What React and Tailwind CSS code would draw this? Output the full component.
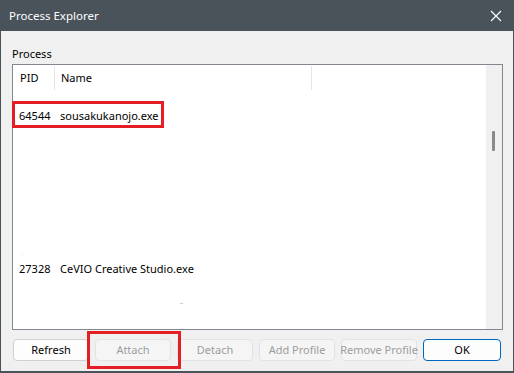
import React from 'react'

const font = { fontFamily: '"Noto Sans", "Open Sans", sans-serif' }

const buttons = [
  { label: 'Refresh', state: 'normal', w: 'w-[76px]' },
  { label: 'Attach', state: 'disabled', w: 'w-[76px]' },
  { label: 'Detach', state: 'disabled', w: 'w-[76px]' },
  { label: 'Add Profile', state: 'disabled', w: 'w-[76px]' },
  { label: 'Remove Profile', state: 'disabled', w: 'w-[76px]' },
  { label: 'OK', state: 'primary', w: 'w-[78px]' },
]

const buttonClass = {
  normal: 'bg-[#fdfdfd] border-[#d0d0d0] text-black',
  disabled: 'bg-[#f5f5f5] border-[#e3e3e3] text-[#9d9d9d]',
  primary: 'bg-[#fdfdfd] border-[#0067c0] text-black',
}

const App = () => {
  return (
    <div
      className="relative w-[514px] h-[373px] flex flex-col bg-[#4a535a] overflow-hidden text-[11px]"
      style={font}
    >
      {/* Title bar */}
      <div className="h-[31px] flex items-center justify-between pl-[9px] pr-[11px] text-white">
        <span className="text-[11.5px] leading-none">Process Explorer</span>
        <svg width="12" height="12" viewBox="0 0 12 12" className="mr-[1px]">
          <path d="M1 1 L11 11 M11 1 L1 11" stroke="#ffffff" strokeWidth="1.1" />
        </svg>
      </div>

      {/* Body */}
      <div className="flex-1 mx-[1px] mb-[2px] bg-[#f0f0f0] flex flex-col pl-[11px] pr-[10px]">
        <div className="h-[33px] flex items-end pb-[3px] text-black leading-none">
          <span className="pb-[2px]">Process</span>
        </div>

        {/* List view */}
        <div className="h-[266px] border border-[#828790] bg-white flex">
          <div className="flex-1 flex flex-col">
            <div className="h-[25px] flex items-center pt-[1px] text-black">
              <div className="w-[41px] pl-[7px]">PID</div>
              <div className="w-px h-[24px] bg-[#e5e5e5]" />
              <div className="w-[256px] pl-[6px]">Name</div>
              <div className="w-px h-[24px] bg-[#e5e5e5]" />
            </div>
            <div className="h-[14px]" />
            <div className="h-[24px] flex items-center text-black whitespace-nowrap">
              <div className="w-[47px] pl-[6px]">64544</div>
              <div>sousakukanojo.exe</div>
            </div>
            <div className="h-[129px] relative">
              <div className="absolute left-[9px] top-[126px] w-px h-px bg-[#d8d8d8]" />
            </div>
            <div className="h-[24px] flex items-center text-black whitespace-nowrap">
              <div className="w-[47px] pl-[6px]">27328</div>
              <div>CeVIO Creative Studio.exe</div>
            </div>
            <div className="relative flex-1">
              <div className="absolute left-[167px] top-[22px] w-[3px] h-px bg-[#d0d0d0]" />
            </div>
          </div>
          {/* Scrollbar */}
          <div className="w-[16px] bg-[#f0f0f0] relative">
            <div className="absolute left-[6px] top-[66px] w-[3px] h-[20px] bg-[#8a8a8a] rounded-[1px]" />
          </div>
        </div>

        {/* Buttons */}
        <div className="mt-[9px] flex gap-[6px] pl-[1px]">
          {buttons.map((b) => (
            <div
              key={b.label}
              className={`${b.w} h-[22px] flex items-center justify-center border rounded-[4px] whitespace-nowrap ${buttonClass[b.state]}`}
            >
              {b.label}
            </div>
          ))}
        </div>
      </div>

      {/* Red annotation boxes */}
      <div className="absolute left-[12px] top-[101px] w-[152px] h-[27px] border-[3px] border-[#e31e24]" />
      <div className="absolute left-[87px] top-[331px] w-[94px] h-[38px] border-[3px] border-[#e31e24]" />
    </div>
  )
}

export default App
